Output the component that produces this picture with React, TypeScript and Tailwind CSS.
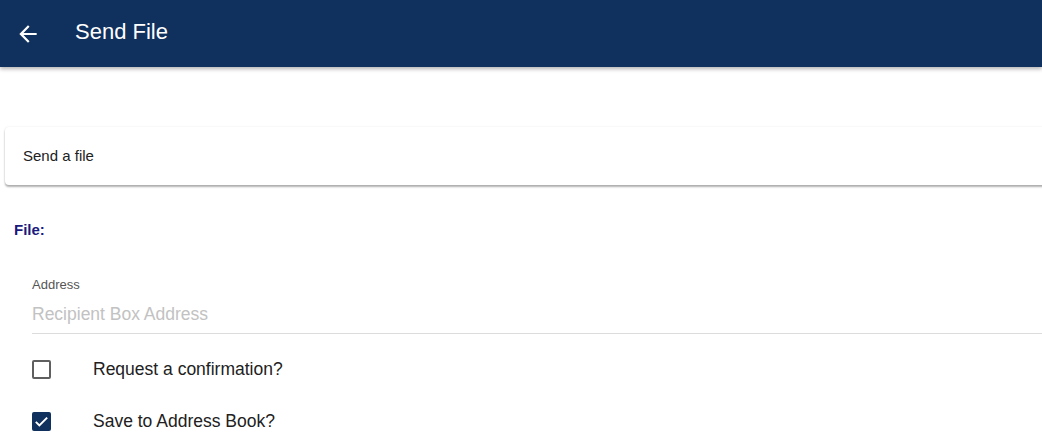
import { useState } from "react";

export default function App() {
    const [confirm, setConfirm] = useState(false);
    const [save, setSave] = useState(true);

    return (
        <div className="w-[1042px] h-[435px] overflow-hidden bg-white font-['Liberation_Sans',sans-serif]">
            {/* top bar */}
            <div className="h-[67px] bg-[#10305e] flex items-center pb-[3px] shadow-[0_2px_4px_rgba(0,0,0,0.3)] relative z-10">
                <button className="w-[56px] h-full flex items-center justify-center text-white pt-[3px]">
                    <svg width="26" height="26" viewBox="0 0 24 24" fill="currentColor">
                        <path d="M20 11H7.83l5.59-5.59L12 4l-8 8 8 8 1.41-1.41L7.83 13H20v-2z" />
                    </svg>
                </button>
                <h1 className="ml-[19px] text-white text-[22px] leading-[26px]">Send File</h1>
            </div>

            <div className="w-[1100px] pt-[60px]">
                {/* card */}
                <div className="ml-[5px] h-[58px] bg-white rounded-[4px] shadow-[0_2px_2px_rgba(0,0,0,0.3),0_0_2px_rgba(0,0,0,0.1)] flex items-center px-[18px] text-[15px] text-[#212121]">
                    Send a file
                </div>

                <div className="mt-[35px] ml-[14px] text-[15px] leading-[20px] font-bold text-[#1a1a7e]">File:</div>

                {/* address field */}
                <div className="ml-[32px] mt-[37px] border-b border-[#dcdcdc] pb-[6px]">
                    <div className="text-[13px] leading-[16px] text-[#555]">Address</div>
                    <input
                        className="mt-[10px] w-full outline-none text-[17.5px] leading-[22px] h-[22px] placeholder:text-[#c2c2c2]"
                        placeholder="Recipient Box Address"
                    />
                </div>

                <label className="flex items-center ml-[32px] mt-[25px] h-[20px] cursor-pointer" onClick={() => setConfirm(!confirm)}>
                    <span className={`w-[19px] h-[19px] rounded-[2px] flex items-center justify-center ${confirm ? "bg-[#10305e]" : "border-2 border-[#5f5f5f]"}`}>
                        {confirm && (
                            <svg width="17" height="17" viewBox="0 0 24 24" fill="none" stroke="white" strokeWidth="2.8">
                                <path d="M4 12.5l5 5L20 6.5" />
                            </svg>
                        )}
                    </span>
                    <span className="ml-[42px] text-[17.5px] text-[#212121]">Request a confirmation?</span>
                </label>

                <label className="flex items-center ml-[32px] mt-[32px] h-[20px] cursor-pointer" onClick={() => setSave(!save)}>
                    <span className={`w-[19px] h-[19px] rounded-[2px] flex items-center justify-center ${save ? "bg-[#10305e]" : "border-2 border-[#5f5f5f]"}`}>
                        {save && (
                            <svg width="17" height="17" viewBox="0 0 24 24" fill="none" stroke="white" strokeWidth="2.8">
                                <path d="M4 12.5l5 5L20 6.5" />
                            </svg>
                        )}
                    </span>
                    <span className="ml-[42px] text-[17.5px] text-[#212121]">Save to Address Book?</span>
                </label>
            </div>
        </div>
    );
}
